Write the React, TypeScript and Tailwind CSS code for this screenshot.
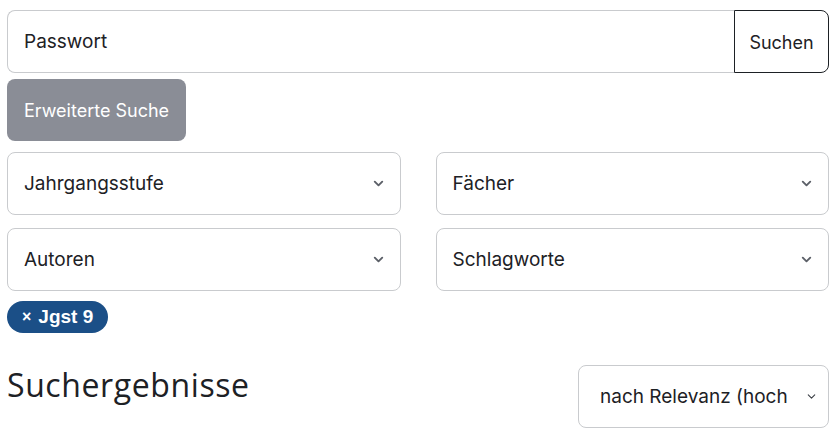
import { ChevronDown } from 'lucide-react';

const FilterSelect = ({ label }: { label: string }) => (
  <div className="flex h-[63px] items-center justify-between rounded-[8px] border border-[#c9cbce] bg-white pl-[16px] pr-[14px]">
    <span className="pt-[2px] text-[19px] text-[#1d2125]">{label}</span>
    <ChevronDown size={15} strokeWidth={3} className="text-[#5c6068]" />
  </div>
);

export default function App() {
  return (
    <div className="min-h-[436px] bg-white pl-[7px] pr-[11px] pt-[10px] font-['Inter','Noto_Sans',sans-serif] text-[#1d2125]">
      {/* Search bar */}
      <div className="flex h-[63px]">
        <div className="flex flex-1 items-center rounded-l-[8px] border border-r-0 border-[#c9cbce] pl-[16px] pt-[2px] text-[19px]">
          Passwort
        </div>
        <button className="w-[95px] rounded-r-[8px] border border-[#1d2125] pt-[2px] text-[18px]">Suchen</button>
      </div>

      <button className="mt-[6px] h-[62px] w-[179px] rounded-[8px] bg-[#8a8d96] text-[18px] text-white">
        Erweiterte Suche
      </button>

      {/* Filters */}
      <div className="mt-[11px] grid grid-cols-2 gap-x-[35px] gap-y-[13px]">
        <FilterSelect label="Jahrgangsstufe" />
        <FilterSelect label="Fächer" />
        <FilterSelect label="Autoren" />
        <FilterSelect label="Schlagworte" />
      </div>

      <div className="mt-[10px] flex">
        <span className="flex h-[32px] items-center gap-[7px] rounded-full bg-[#1b4f87] px-[15px] font-['Liberation_Sans',sans-serif] text-[19px] font-bold text-white">
          <span className="text-[16px]">×</span> Jgst 9
        </span>
      </div>

      {/* Results header */}
      <div className="mt-[32px] flex items-start justify-between">
        <h2 className="mt-[4px] font-['Open_Sans',sans-serif] text-[32px] leading-none tracking-[0.6px]">Suchergebnisse</h2>
        <div className="flex h-[63px] w-[251px] items-center justify-between overflow-hidden rounded-[8px] border border-[#c9cbce] pl-[21px] pr-[10px]">
          <span className="whitespace-nowrap pt-[2px] text-[19px]">nach Relevanz (hoch</span>
          <ChevronDown size={13} strokeWidth={2} className="shrink-0 text-[#3b3f46]" />
        </div>
      </div>
    </div>
  );
}
